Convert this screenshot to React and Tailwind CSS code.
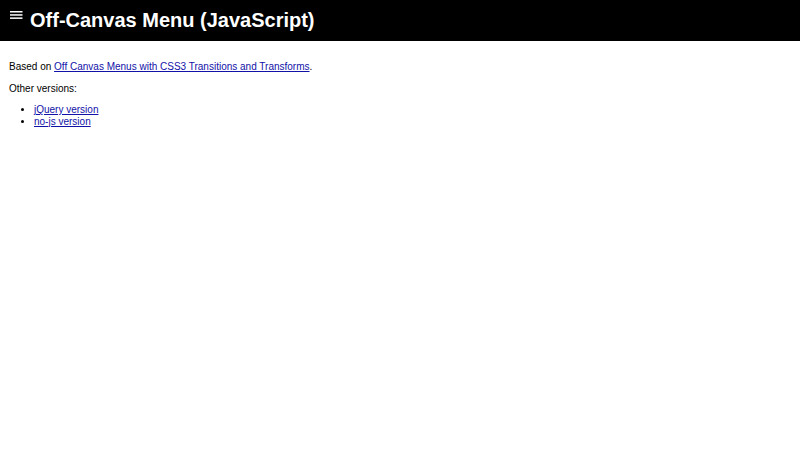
export default function App() {
  return (
    <div className="min-h-[450px] bg-white text-black">
      <header className="bg-black py-[9px] pl-[10px]">
        <h1 className="flex items-start text-[20px] leading-[23px] font-bold text-white font-['Liberation_Sans',Arial,sans-serif]">
          <a href="#" className="mt-[2px] mr-[7px] block">
            <svg width="13" height="9" viewBox="0 0 13 9" className="block">
              <rect x="0" y="0" width="12.5" height="1.5" fill="#fff" />
              <rect x="0" y="3.2" width="12.5" height="1.5" fill="#fff" />
              <rect x="0" y="6.4" width="12.5" height="1.5" fill="#fff" />
            </svg>
          </a>
          <span>Off-Canvas Menu (JavaScript)</span>
        </h1>
      </header>
      <main className="px-[9px] pt-[20px] text-[10px] leading-[11.5px] font-['Liberation_Sans',Arial,sans-serif]">
        <p className="mb-[10px]">
          Based on{" "}
          <a href="#" className="text-[#1212a8] underline">
            Off Canvas Menus with CSS3 Transitions and Transforms
          </a>
          .
        </p>
        <p className="mb-[10px]">Other versions:</p>
        <ul className="list-disc pl-[25px]">
          <li>
            <a href="#" className="text-[#1212a8] underline">jQuery version</a>
          </li>
          <li>
            <a href="#" className="text-[#1212a8] underline">no-js version</a>
          </li>
        </ul>
      </main>
    </div>
  );
}
